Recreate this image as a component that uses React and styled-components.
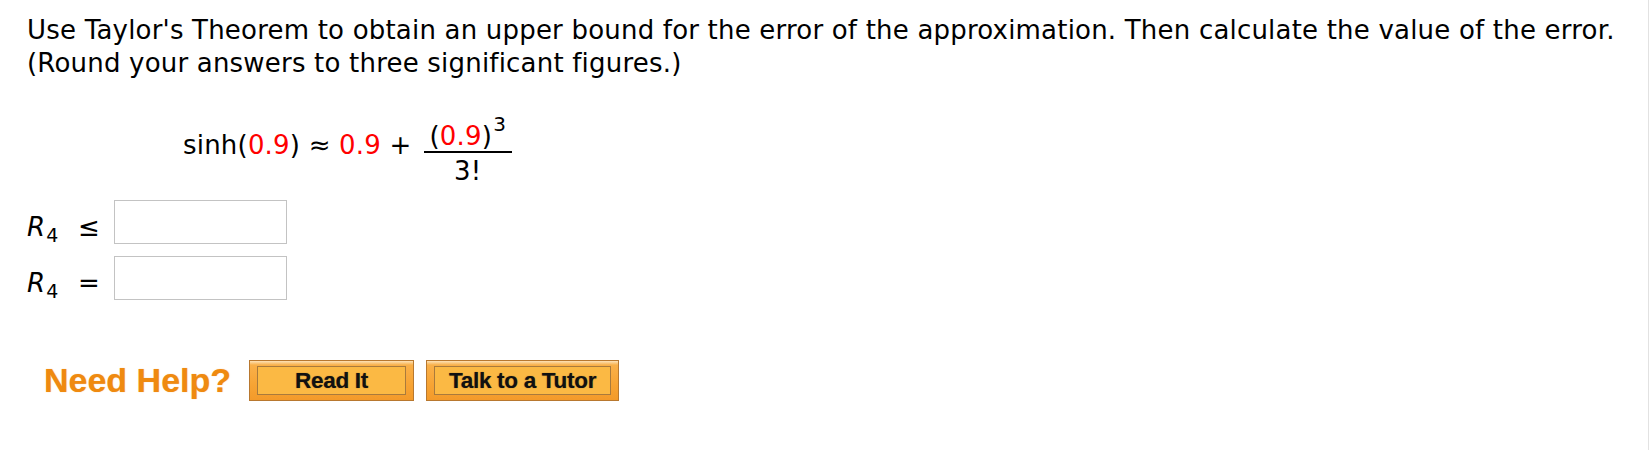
import React from 'react'
import styled, { createGlobalStyle } from 'styled-components'

const GlobalStyle = createGlobalStyle`
    html, body {
        margin: 0;
        padding: 0;
        background: #ffffff;
    }
`

const Page = styled.div`
    box-sizing: border-box;
    width: 1649px;
    height: 450px;
    padding: 14px 0 0 27px;
    border-right: 1px solid #e2e2e2;
    font-family: "DejaVu Sans", Verdana, sans-serif;
    font-size: 26px;
    letter-spacing: 0.2px;
    color: #000;
`

const Question = styled.p`
    margin: 0;
    line-height: 33px;
`

const Formula = styled.div`
    display: flex;
    align-items: flex-start;
    margin: 41px 0 0 156px;
`

const Lhs = styled.span`
    margin-top: 9px;
    line-height: 30px;
    white-space: pre;
`

const Red = styled.span`
    color: #ff0000;
`

const Fraction = styled.span`
    display: flex;
    flex-direction: column;
    align-items: stretch;
    margin-left: 12px;
`

const Numer = styled.span`
    display: block;
    padding: 0 6px;
    line-height: 30px;
    text-align: center;
    border-bottom: 2px solid #000;
`

const Sup = styled.sup`
    font-size: 20px;
    line-height: 0;
    vertical-align: 14px;
    margin-left: 1px;
`

const Denom = styled.span`
    display: block;
    margin-top: 3px;
    line-height: 30px;
    text-align: center;
`

const Answers = styled.div`
    display: flex;
    flex-direction: column;
    gap: 12px;
    margin-top: 14px;
`

const AnswerRow = styled.div`
    display: flex;
    align-items: flex-start;
`

const Label = styled.span`
    display: flex;
    align-items: baseline;
    width: 87px;
    padding-top: 12px;
    line-height: 30px;
`

const Symbol = styled.span`
    width: 51px;
`

const Var = styled.i`
    font-style: italic;
`

const Sub = styled.sub`
    font-size: 19px;
    line-height: 0;
    vertical-align: -6px;
    margin-left: 1px;
`

const Op = styled.span``

const Field = styled.input`
    box-sizing: border-box;
    width: 173px;
    height: 44px;
    margin: 0;
    padding: 0 6px;
    border: 1px solid #c3c3c3;
    border-radius: 0;
    outline: none;
    font: inherit;
    background: #fff;
`

const HelpRow = styled.div`
    display: flex;
    align-items: center;
    margin: 60px 0 0 17px;
`

const HelpTitle = styled.span`
    font-family: "Liberation Sans", Arial, sans-serif;
    font-weight: bold;
    font-size: 34px;
    letter-spacing: 0;
    color: #ef8a10;
    text-shadow: 0 0 1px rgba(239, 138, 16, 0.6);
    margin-right: 18px;
`

const HelpButton = styled.button`
    box-sizing: border-box;
    display: flex;
    width: ${p => p.$w}px;
    height: 41px;
    margin: 0 12px 0 0;
    padding: 5px 7px 5px 7px;
    border: 1px solid #b8782f;
    background: linear-gradient(#fde2b8 0, #f9b04a 4px, #f7a434 60%, #f39a2a 100%);
    cursor: pointer;
`

const ButtonFace = styled.span`
    flex: 1;
    display: flex;
    align-items: center;
    justify-content: center;
    border: 1px solid #a97a3c;
    background: #fbb944;
    font-family: "Liberation Sans", Arial, sans-serif;
    font-weight: bold;
    font-size: 22.5px;
    letter-spacing: -0.3px;
    color: #111;
    text-shadow: 0 0 1px rgba(0, 0, 0, 0.5);
`

export default function App() {
    return (
        <>
            <GlobalStyle />
            <Page>
                <Question>
                    Use Taylor's Theorem to obtain an upper bound for the error of the approximation. Then calculate the value of the error.
                    <br />
                    (Round your answers to three significant figures.)
                </Question>
                <Formula>
                    <Lhs>sinh(<Red>0.9</Red>) ≈ <Red>0.9</Red> +</Lhs>
                    <Fraction>
                        <Numer>(<Red>0.9</Red>)<Sup>3</Sup></Numer>
                        <Denom>3!</Denom>
                    </Fraction>
                </Formula>
                <Answers>
                    <AnswerRow>
                        <Label>
                            <Symbol><Var>R</Var><Sub>4</Sub></Symbol>
                            <Op>≤</Op>
                        </Label>
                        <Field type="text" />
                    </AnswerRow>
                    <AnswerRow>
                        <Label>
                            <Symbol><Var>R</Var><Sub>4</Sub></Symbol>
                            <Op>=</Op>
                        </Label>
                        <Field type="text" />
                    </AnswerRow>
                </Answers>
                <HelpRow>
                    <HelpTitle>Need Help?</HelpTitle>
                    <HelpButton $w={165}><ButtonFace>Read It</ButtonFace></HelpButton>
                    <HelpButton $w={193}><ButtonFace>Talk to a Tutor</ButtonFace></HelpButton>
                </HelpRow>
            </Page>
        </>
    )
}
